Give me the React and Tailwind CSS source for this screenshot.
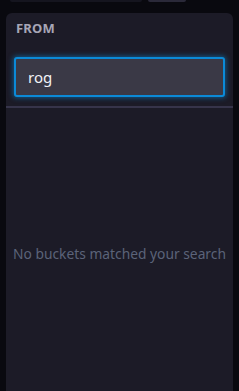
export default function App() {
  return (
    <div
      className="w-[239px] h-[391px] bg-[#09090f] flex flex-col overflow-hidden"
      style={{ fontFamily: '"Noto Sans", "Open Sans", sans-serif' }}
    >
      {/* remnants of the row above */}
      <div className="flex h-[2px] shrink-0">
        <div className="ml-[10px] w-[132px] bg-[#15151f] rounded-b-sm" />
        <div className="ml-[6px] w-[38px] bg-[#2a2939] rounded-b-sm" />
      </div>

      <div className="mx-[6px] mt-[11px] flex-1 flex flex-col bg-[#1c1b27] rounded-t-md">
        <div className="px-[8px] pt-[6px] pb-[9px]">
          <div className="pl-[2px] text-[13px] font-bold text-[#a7a6b6] leading-[18px] tracking-[0.2px]">
            FROM
          </div>
          <div className="mt-[20px] h-[40px] rounded-[3px] border-2 border-[#0b8ad7] bg-[#3a3946] shadow-[0_0_5px_1px_rgba(11,138,215,0.55)] flex items-center px-[12px]">
            <span className="text-[15px] text-[#f2f2f6] leading-none">rog</span>
          </div>
        </div>
        <div className="h-[2px] bg-[#36344a]" />
        <div className="flex-1 flex items-center justify-center pt-[10px]">
          <span className="text-[13.8px] text-[#5b6379] whitespace-nowrap">
            No buckets matched your search
          </span>
        </div>
      </div>
    </div>
  );
}
